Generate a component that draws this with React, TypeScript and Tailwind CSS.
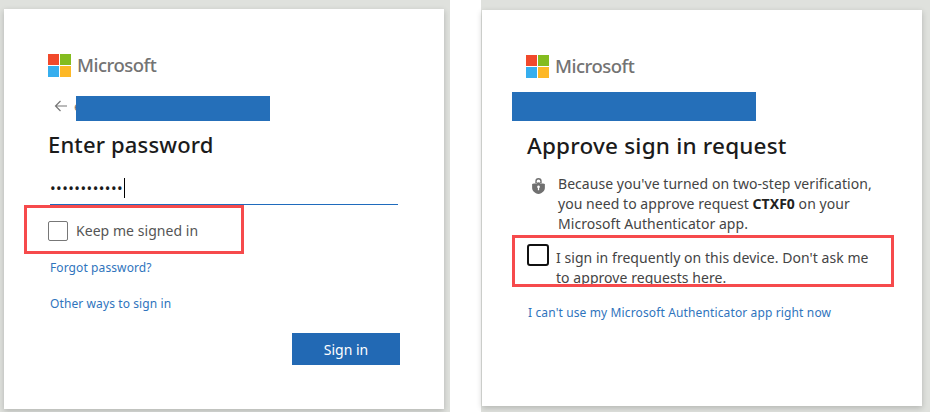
import React from "react";

function Logo() {
  return (
    <div className="flex items-center gap-[6px]">
      <div className="grid grid-cols-[11px_11px] grid-rows-[11px_11px] gap-[1px]">
        <div className="bg-[#f1492b]" />
        <div className="bg-[#84bc1f]" />
        <div className="bg-[#36aeee]" />
        <div className="bg-[#fdb827]" />
      </div>
      <span className="text-[18.5px] leading-[24px] font-medium tracking-[-0.5px] text-[#737373]">Microsoft</span>
    </div>
  );
}

function Card({ className, children }: { className: string; children: React.ReactNode }) {
  return <div className={"relative w-[440px] bg-white shadow-[0_2px_6px_rgba(0,0,0,0.2)] " + className}>{children}</div>;
}

export default function App() {
  return (
    <div className="flex h-[412px] w-[930px] overflow-hidden bg-white font-['Noto_Sans',sans-serif]">
      <div className="h-[412px] w-[450px] bg-[#dfe1dd] pl-[4px] pt-[9px]">
        <Card className="h-[400px] pl-[44px] pt-[44px]">
          <Logo />
          <div className="mt-[17px] flex h-[24px] items-center gap-[6px] pl-[6px] text-[#777]">
            <svg width="14" height="14" viewBox="0 0 14 14" fill="none" stroke="currentColor" strokeWidth="1.2">
              <path d="M13 7H1.500M6.500 2 1.500 7l5 5" />
            </svg>
            <span className="text-[13px] leading-[16px]">e</span>
          </div>
          <h1 className="mt-[10px] text-[22px] leading-[32px] font-medium tracking-[0.15px] text-[#1b1b1b]">Enter password</h1>
          <div className="mr-[46px] ml-[2px] mt-[11px] flex h-[34px] items-center border-b border-[#1f6bbd]">
            <span className="text-[15px] leading-[16px] tracking-[0.45px] text-[#1b1b1b]">••••••••••••</span>
            <span className="ml-[1px] h-[20px] w-[1px] bg-black" />
          </div>
          <label className="mt-[16px] flex items-center gap-[8px]">
            <span className="h-[20px] w-[20px] rounded-[2px] border border-[#777]" />
            <span className="text-[14px] leading-[20px] tracking-[0.05px] text-[#555]">Keep me signed in</span>
          </label>
          <a className="mt-[17px] block pl-[2px] text-[12px] leading-[20px] tracking-[0.1px] text-[#2f74bd]">Forgot password?</a>
          <a className="mt-[16px] block pl-[2px] text-[12px] leading-[20px] tracking-[0.1px] text-[#2f74bd]">Other ways to sign in</a>
          <div className="mt-[19px] flex justify-end pr-[44px]">
            <button className="h-[32px] w-[108px] bg-[#2269b4] text-[14px] text-white">Sign in</button>
          </div>
          <div className="absolute left-[72px] top-[87px] h-[25px] w-[194px] bg-[#256fb9]" />
          <div className="absolute left-[20px] top-[196px] h-[49px] w-[220px] border-[3px] border-[#f64a4c]" />
        </Card>
      </div>
      <div className="ml-[31px] h-[412px] w-[449px] bg-[#dfe1dd] pl-[1px] pt-[10px]">
        <Card className="h-[396px] pl-[44px] pt-[44px]">
          <Logo />
          <h1 className="mt-[52px] pl-[1px] text-[22.5px] leading-[32px] font-medium tracking-[0.2px] text-[#1b1b1b]">Approve sign in request</h1>
          <div className="mt-[12px] flex pr-[48px]">
            <div className="w-[32px] shrink-0 pl-[5px] pt-[3px] text-[#707070]">
              <svg width="15" height="17" viewBox="0 0 14 16" fill="currentColor">
                <path fillRule="evenodd" d="M4 6V4a3 3 0 0 1 6 0v2h-1.300V4a1.700 1.700 0 0 0-3.400 0v2H4ZM7 5l6 1.500v3.500c0 3-2.500 5-6 6-3.500-1-6-3-6-6V6.500L7 5Zm0 3a1.300 1.300 0 0 0-.6 2.450V12.500h1.200v-2.050A1.300 1.300 0 0 0 7 8Z" />
              </svg>
            </div>
            <p className="text-[14px] leading-[20px] tracking-[0.05px] text-[#444]">
              Because you've turned on two-step verification, you need to approve request <b className="font-bold text-[#222]">CTXF0</b> on your Microsoft Authenticator app.
            </p>
          </div>
          <label className="mt-[14px] flex items-start gap-[7px] pl-[1px] pr-[48px]">
            <span className="-mt-[4px] h-[22px] w-[22px] shrink-0 rounded-[3px] border-2 border-[#111]" />
            <span className="text-[14px] leading-[20px] tracking-[0.05px] text-[#444]">I sign in frequently on this device. Don't ask me to approve requests here.</span>
          </label>
          <a className="mt-[15px] block pl-[2px] text-[12px] leading-[20px] tracking-[0.13px] text-[#2f74bd]">I can't use my Microsoft Authenticator app right now</a>
          <div className="absolute left-[30px] top-[82px] h-[29px] w-[244px] bg-[#256fb9]" />
          <div className="absolute left-[30px] top-[225px] h-[52px] w-[382px] border-[3px] border-[#f64a4c]" />
        </Card>
      </div>
    </div>
  );
}
